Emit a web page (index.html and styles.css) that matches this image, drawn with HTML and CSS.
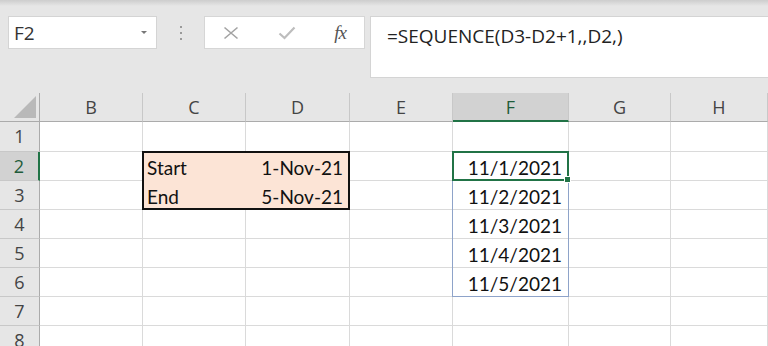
FILE: index.html
```html
<!DOCTYPE html>
<html lang="en">
  <head>
    <title>SEQUENCE dates</title>
    <link rel="stylesheet" href="styles.css">
  </head>
  <body>
    <!-- name box + formula bar -->
    <div class="ribbon">
      <div class="namebox">
        <span>F2</span>
        <span class="caret"></span>
      </div>
      <div class="grip"><i></i><i></i><i></i></div>
      <div class="fbtns">
        <svg width="16" height="14" viewBox="0 0 16 14"><path d="M1.5 1.5 L14.5 12.5 M14.5 1.5 L1.5 12.5" stroke="#a3a3a3" stroke-width="1.6" fill="none"/></svg>
        <svg width="18" height="14" viewBox="0 0 18 14"><path d="M1.5 7.5 L6.5 12 L16.5 1.5" stroke="#bdbdbd" stroke-width="2.2" fill="none"/></svg>
        <span class="fx">fx</span>
      </div>
      <div class="formula">=SEQUENCE(D3-D2+1,,D2,)</div>
    </div>

    <!-- the sheet -->
    <div class="sheet">
      <div class="corner"><span></span></div>
      <div class="colhead">B</div>
      <div class="colhead">C</div>
      <div class="colhead">D</div>
      <div class="colhead">E</div>
      <div class="colhead active">F</div>
      <div class="colhead">G</div>
      <div class="colhead">H</div>

      <div class="rowhead first">1</div>
      <div class="cell first"></div><div class="cell first"></div><div class="cell first"></div><div class="cell first"></div><div class="cell first"></div><div class="cell first"></div><div class="cell first"></div>

      <div class="rowhead active">2</div>
      <div class="cell"></div>
      <div class="cell hl">Start</div>
      <div class="cell hl num">1-Nov-21</div>
      <div class="cell"></div>
      <div class="cell num">11/1/2021</div>
      <div class="cell"></div><div class="cell"></div>

      <div class="rowhead">3</div>
      <div class="cell"></div>
      <div class="cell hl">End</div>
      <div class="cell hl num">5-Nov-21</div>
      <div class="cell"></div>
      <div class="cell num">11/2/2021</div>
      <div class="cell"></div><div class="cell"></div>

      <div class="rowhead">4</div>
      <div class="cell"></div><div class="cell"></div><div class="cell"></div><div class="cell"></div>
      <div class="cell num">11/3/2021</div>
      <div class="cell"></div><div class="cell"></div>

      <div class="rowhead">5</div>
      <div class="cell"></div><div class="cell"></div><div class="cell"></div><div class="cell"></div>
      <div class="cell num">11/4/2021</div>
      <div class="cell"></div><div class="cell"></div>

      <div class="rowhead">6</div>
      <div class="cell"></div><div class="cell"></div><div class="cell"></div><div class="cell"></div>
      <div class="cell num">11/5/2021</div>
      <div class="cell"></div><div class="cell"></div>

      <div class="rowhead">7</div>
      <div class="cell"></div><div class="cell"></div><div class="cell"></div><div class="cell"></div><div class="cell"></div><div class="cell"></div><div class="cell"></div>

      <div class="rowhead">8</div>
      <div class="cell"></div><div class="cell"></div><div class="cell"></div><div class="cell"></div><div class="cell"></div><div class="cell"></div><div class="cell"></div>

      <!-- range outlines, placed on grid areas -->
      <div class="box-range"></div>
      <div class="spill-range"></div>
      <div class="active-cell"><span class="handle"></span></div>
    </div>
  </body>
</html>
```

FILE: styles.css
```css
body {
  margin: 0;
  height: 346px;
  overflow: hidden;
  background: #fff;
  font-family: "Open Sans", "Noto Sans", sans-serif;
}

/* Top strip: name box, buttons, formula */
.ribbon {
  display: flex;
  align-items: flex-start;
  height: 93px;
  padding: 16px 0 0 8px;
  box-sizing: border-box;
  background: linear-gradient(#cdcdcd, #e6e6e6 6px);
}

.namebox {
  width: 149px;
  height: 33px;
  box-sizing: border-box;
  background: #fff;
  border: 1px solid #d4d4d4;
  display: flex;
  align-items: center;
  justify-content: space-between;
  padding: 0 9px 0 5px;
  font-size: 19px;
  color: #333;
}

.caret {
  border-left: 3px solid transparent;
  border-right: 3px solid transparent;
  border-top: 3px solid #777;
}

.grip {
  width: 47px;
  height: 33px;
  display: flex;
  flex-direction: column;
  align-items: center;
  justify-content: center;
  gap: 4px;
}
.grip i {
  width: 2px;
  height: 2px;
  background: #9a9a9a;
}

.fbtns {
  width: 161px;
  height: 33px;
  box-sizing: border-box;
  background: #fff;
  border: 1px solid #d6d6d6;
  display: flex;
  align-items: center;
  padding: 0 18px 0 18px;
  justify-content: space-between;
}

.fx {
  font-family: "Liberation Serif", serif;
  font-style: italic;
  font-size: 19px;
  color: #555;
  letter-spacing: -1px;
}

.formula {
  flex: 1;
  margin-left: 5px;
  height: 62px;
  box-sizing: border-box;
  background: #fff;
  border: 1px solid #d4d4d4;
  border-right: none;
  padding: 6px 0 0 16px;
  font-size: 19px;
  line-height: 26px;
  color: #222;
}

/* Sheet grid */
.sheet {
  position: relative;
  display: grid;
  grid-template-columns: 40px 103px 103px 104px 103px 116px 102px 1fr;
  grid-template-rows: 29px 30px repeat(7, 29px);
  background: #fff;
}

.corner {
  background: #e6e6e6;
  border-right: 1px solid #ababab;
  border-bottom: 1px solid #ababab;
  display: flex;
  align-items: flex-end;
  justify-content: flex-end;
  padding: 0 3px 3px 0;
}
.corner span {
  width: 0;
  height: 0;
  border-left: 22px solid transparent;
  border-bottom: 22px solid #b9b9b9;
}

.colhead {
  background: #e6e6e6;
  border-right: 1px solid #c8c8c8;
  border-bottom: 1px solid #ababab;
  text-align: center;
  font-size: 18px;
  line-height: 29px;
  color: #444;
}
.colhead.active {
  background: #d2d2d2;
  border-bottom: 2px solid #217346;
  color: #1f5c3a;
}

.rowhead {
  background: #e6e6e6;
  border-right: 1px solid #ababab;
  border-bottom: 1px solid #c8c8c8;
  text-align: center;
  font-size: 18px;
  line-height: 28px;
  color: #444;
}
.rowhead.first {
  line-height: 29px;
}
.rowhead.active {
  background: #d2d2d2;
  border-right: 2px solid #217346;
  color: #1f5c3a;
}

.cell {
  border-right: 1px solid #dadada;
  border-bottom: 1px solid #dadada;
  display: flex;
  align-items: flex-end;
  padding: 0 6px 1px 4px;
  font-family: Lato, "Liberation Sans", sans-serif;
  font-size: 19px;
  line-height: 22px;
  color: #111;
}
.cell.num {
  justify-content: flex-end;
}
.cell.hl {
  background: #fce4d6;
  border-color: #fce4d6;
}

/* Range outlines sit on top of the gridlines */
.box-range,
.spill-range,
.active-cell {
  position: absolute;
  pointer-events: none;
}
.box-range {
  grid-column: 3 / 5;
  grid-row: 3 / 5;
  inset: -1px 0 0 -1px;
  border: 2px solid #111;
}
.spill-range {
  grid-column: 6 / 7;
  grid-row: 3 / 8;
  inset: 0 0 0 -1px;
  border: 1px solid #8ea3c9;
}
.active-cell {
  grid-column: 6 / 7;
  grid-row: 3 / 4;
  inset: -1px 0 0 -1px;
  border: 2px solid #217346;
}
.handle {
  position: absolute;
  right: -4px;
  bottom: -4px;
  width: 5px;
  height: 5px;
  background: #217346;
  border: 1px solid #fff;
}
```
